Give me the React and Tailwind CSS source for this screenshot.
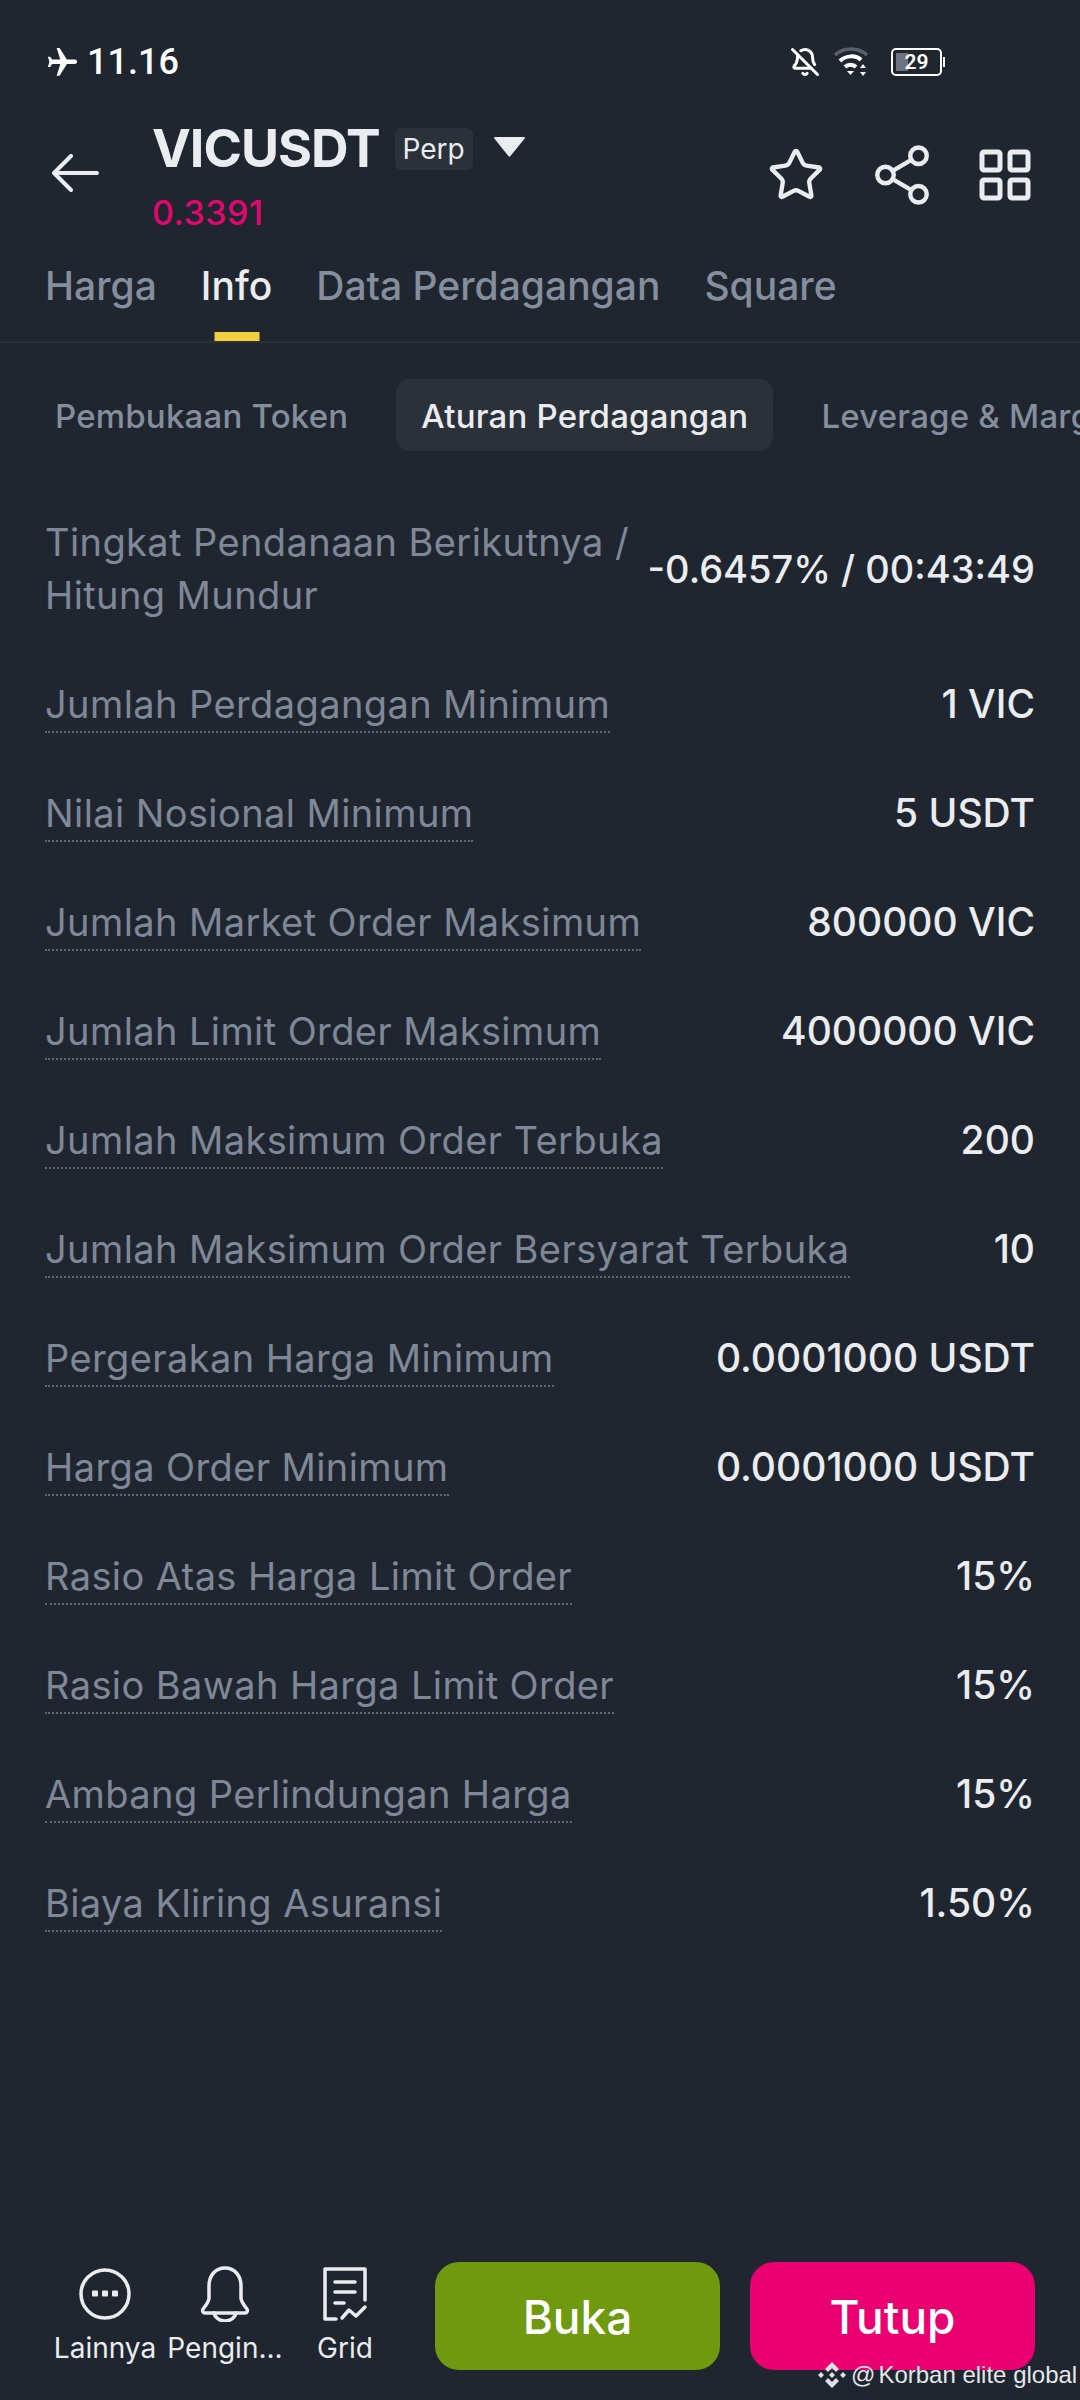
import React from "react";
import { BellOff, Star, Share2 } from "lucide-react";

const rows = [
  ["Jumlah Perdagangan Minimum", "1 VIC"],
  ["Nilai Nosional Minimum", "5 USDT"],
  ["Jumlah Market Order Maksimum", "800000 VIC"],
  ["Jumlah Limit Order Maksimum", "4000000 VIC"],
  ["Jumlah Maksimum Order Terbuka", "200"],
  ["Jumlah Maksimum Order Bersyarat Terbuka", "10"],
  ["Pergerakan Harga Minimum", "0.0001000 USDT"],
  ["Harga Order Minimum", "0.0001000 USDT"],
  ["Rasio Atas Harga Limit Order", "15%"],
  ["Rasio Bawah Harga Limit Order", "15%"],
  ["Ambang Perlindungan Harga", "15%"],
  ["Biaya Kliring Asuransi", "1.50%"],
];

const StatusBar = () => (
  <div className="flex items-center justify-between h-[62px] mt-[31px] pl-[45px] pr-[135px]">
    <div className="flex items-center gap-[7px]">
      <svg width="35" height="35" viewBox="0 0 24 24" fill="white" className="rotate-90">
        <path d="M21 16v-2l-8-5V3.5c0-.83-.67-1.5-1.5-1.5S10 2.67 10 3.5V9l-8 5v2l8-2.5V19l-2 1.5V22l3.5-1 3.5 1v-1.5L13 19v-5.5l8 2.5z" />
      </svg>
      <span className="text-[36px] leading-none font-medium font-['Roboto',sans-serif] text-white">11.16</span>
    </div>
    <div className="flex items-center">
      <BellOff size={30} color="white" strokeWidth={2.4} />
      <svg width="36" height="30" viewBox="0 0 36 30" fill="none" className="ml-[13px]">
        <path d="M2 8C11 0 25 0 34 8" stroke="#5a606b" strokeWidth="3.5" />
        <path d="M7 14C13 8 23 8 28 13" stroke="white" strokeWidth="4" />
        <path d="M12 20C15 17 20 17 23 20" stroke="white" strokeWidth="4" />
        <path d="M14 24h7l-3.500 4z" fill="white" />
        <path d="M30 17l3 4h-6zM30 29l3-4h-6z" fill="white" />
      </svg>
      <div className="ml-[22px] flex items-center">
        <div className="relative w-[51px] h-[28px] rounded-[5px] border-2 border-white flex items-center justify-center overflow-hidden">
          <div className="absolute left-[3px] top-[3px] bottom-[3px] w-[12px] bg-[#6d7380]" />
          <span className="relative text-[21px] leading-none font-semibold font-['Roboto',sans-serif] text-white">29</span>
        </div>
        <div className="w-[2px] h-[10px] bg-white ml-[1px]" />
      </div>
    </div>
  </div>
);

const Header = () => (
  <div className="flex items-start justify-between h-[118px] mt-[22px] pl-[51px] pr-[49px]">
    <div className="flex">
      <svg width="48" height="38" viewBox="0 0 48 38" fill="none" stroke="#eaecef" strokeWidth="4" strokeLinecap="round" strokeLinejoin="round" className="mt-[39px]">
        <path d="M3 19H46M20 2L3 19L20 36" />
      </svg>
      <div className="ml-[53px] pt-[5px]">
        <div className="flex items-center">
          <span className="text-[52px] leading-[58px] font-bold tracking-[-1px] text-[#eaecef]">VICUSDT</span>
          <span className="ml-[15px] h-[42px] w-[78px] rounded-[6px] bg-[#2b3139] text-[#eaecef] text-[28px] flex items-center justify-center">Perp</span>
          <svg width="31" height="20" viewBox="0 0 31 20" className="ml-[21px] -mt-[4px]">
            <path d="M1 0h29a1 1 0 0 1 .7 1.500L16 19.500a1 1 0 0 1-1.200 0L.3 1.500A1 1 0 0 1 1 0z" fill="#eaecef" />
          </svg>
        </div>
        <div className="mt-[15px] text-[34px] leading-[40px] font-medium tracking-[0.5px] text-[#e0076f]">0.3391</div>
      </div>
    </div>
    <div className="flex items-center gap-[44px] mt-[27px]">
      <Star size={58} color="#eaecef" strokeWidth={1.8} />
      <Share2 size={66} color="#eaecef" strokeWidth={1.6} />
      <svg width="52" height="52" viewBox="0 0 52 52" fill="none" stroke="#eaecef" strokeWidth="5">
        <rect x="3" y="3" width="18" height="18" rx="2" />
        <rect x="31" y="3" width="18" height="18" rx="2" />
        <rect x="3" y="31" width="18" height="18" rx="2" />
        <rect x="31" y="31" width="18" height="18" rx="2" />
      </svg>
    </div>
  </div>
);

const Tabs = () => (
  <div className="flex gap-[44px] h-[83px] mt-[27px] px-[45px] border-b-2 border-[#2b3139]">
    {["Harga", "Info", "Data Perdagangan", "Square"].map((tab) => (
      <div key={tab} className="relative">
        <span className={`text-[39px] leading-[52px] font-medium ${tab === "Info" ? "text-[#eaecef]" : "text-[#848e9c]"}`}>{tab}</span>
        {tab === "Info" && (
          <div className="absolute left-1/2 -translate-x-1/2 bottom-0 w-[45px] h-[9px] bg-[#f0d03f]" />
        )}
      </div>
    ))}
  </div>
);

const SubTabs = () => (
  <div className="flex items-center gap-[23px] mt-[36px] px-[30px] overflow-hidden whitespace-nowrap text-[33px] font-medium tracking-[0.2px]">
    <div className="px-[25px] pt-[3px] h-[72px] flex items-center text-[#848e9c]">Pembukaan Token</div>
    <div className="px-[25px] pt-[3px] h-[72px] flex items-center rounded-[14px] bg-[#2b3139] text-[#eaecef]">Aturan Perdagangan</div>
    <div className="px-[25px] pt-[3px] h-[72px] flex items-center text-[#848e9c]">Leverage &amp; Margin</div>
  </div>
);

const FooterItem = ({ label, children }) => (
  <div className="w-[120px] flex flex-col items-center pt-[4px]">
    <div className="h-[56px] flex items-center justify-center">{children}</div>
    <span className="mt-[9px] text-[28px] leading-[34px] text-[#eaecef] whitespace-nowrap">{label}</span>
  </div>
);

export default function App() {
  return (
    <div className="relative w-[1080px] h-[2400px] overflow-hidden bg-[#1f262f] font-['Inter','Noto_Sans',sans-serif]">
      <StatusBar />
      <Header />
      <Tabs />
      <SubTabs />

      {/* Trading rules list */}
      <div className="px-[45px] mt-[63px]">
        <div className="flex items-center justify-between h-[110px] mb-[48px]">
          <div className="text-[38px] leading-[53px] text-[#7f8897] tracking-[0.4px]">
            Tingkat Pendanaan Berikutnya /<br />Hitung Mundur
          </div>
          <div className="text-[38px] font-medium text-[#eaecef] whitespace-nowrap">-0.6457% / 00:43:49</div>
        </div>
        {rows.map(([label, value]) => (
          <div key={label} className="flex items-start justify-between h-[109px]">
            <span className="pt-[9px] pb-[4px] text-[38px] leading-[46px] tracking-[0.4px] text-[#7f8897] border-b-2 border-dotted border-[#5f6775]">{label}</span>
            <span className="pt-[9px] text-[39px] leading-[46px] font-medium text-[#eaecef]">{value}</span>
          </div>
        ))}
      </div>

      {/* Bottom action bar */}
      <div className="absolute left-0 right-0 top-[2262px] flex items-start pl-[45px] pr-[45px]">
        <div className="flex">
          <FooterItem label="Lainnya">
            <svg width="52" height="52" viewBox="0 0 52 52" fill="none">
              <circle cx="26" cy="26" r="24" stroke="#eaecef" strokeWidth="3.500" />
              <rect x="13" y="22.500" width="6" height="6" rx="1" fill="#eaecef" />
              <rect x="23" y="22.500" width="6" height="6" rx="1" fill="#eaecef" />
              <rect x="33" y="22.500" width="6" height="6" rx="1" fill="#eaecef" />
            </svg>
          </FooterItem>
          <FooterItem label="Pengin...">
            <svg width="52" height="56" viewBox="0 0 52 56" fill="none" stroke="#eaecef" strokeWidth="3.500" strokeLinecap="round" strokeLinejoin="round">
              <path d="M26 2C16 2 10 10 10 20v12c0 4-3 7-6 11-1 2 0 4 2 4h40c2 0 3-2 2-4-3-4-6-7-6-11V20C42 10 36 2 26 2z" />
              <path d="M15 47c1 5 6 8 11 8s10-3 11-8" />
            </svg>
          </FooterItem>
          <FooterItem label="Grid">
            <svg width="46" height="54" viewBox="0 0 46 54" fill="none" stroke="#eaecef" strokeWidth="3.500" strokeLinecap="round" strokeLinejoin="round">
              <path d="M14 52H3V2h40v31" />
              <path d="M13 15h20M13 25h20M13 36h9" />
              <path d="M20 51l7-8 7 6 9-9" />
            </svg>
          </FooterItem>
        </div>
        <div className="ml-[30px] w-[285px] h-[108px] rounded-[24px] bg-[#6f990e] flex items-center justify-center pt-[2px] text-white text-[46px] font-medium">Buka</div>
        <div className="ml-[30px] w-[285px] h-[108px] rounded-[24px] bg-[#ea0070] flex items-center justify-center pt-[2px] text-white text-[46px] font-medium">Tutup</div>
      </div>

      {/* Watermark over the close button */}
      <div className="absolute left-[818px] top-[2360px] flex items-center h-[30px] font-['Liberation_Sans',sans-serif] text-[24px] text-[#e4e6ea] whitespace-nowrap">
        <svg width="28" height="28" viewBox="0 0 28 28" fill="#dfe1e6" className="mr-[5px]">
          <path d="M14 1l7 7-3 3-4-4-4 4-3-3zM14 27l-7-7 3-3 4 4 4-4 3 3zM3 11l3 3-3 3-3-3zM25 11l3 3-3 3-3-3zM14 11l3 3-3 3-3-3z" />
        </svg>
        <span>@</span>
        <span className="ml-[3px]">Korban elite global</span>
      </div>
    </div>
  );
}
